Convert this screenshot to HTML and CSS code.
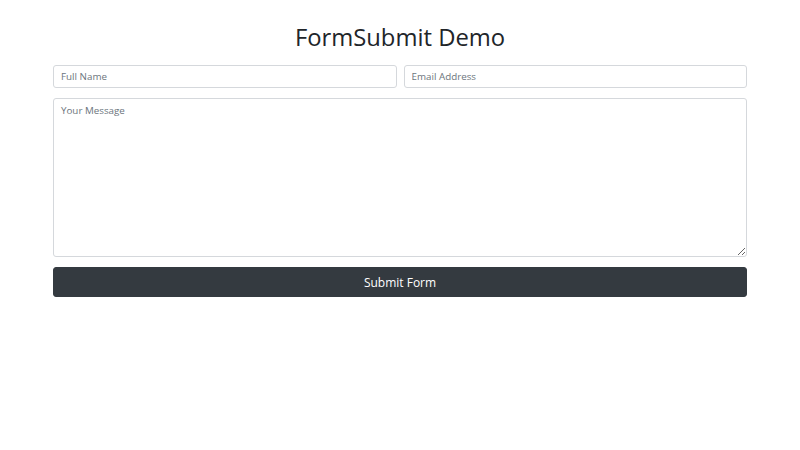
FILE: index.html
```html
<!DOCTYPE html>
<html lang="en">
<head>
<meta charset="utf-8">
<title>FormSubmit Demo</title>
<link rel="stylesheet" href="styles.css">
</head>
<body>
<div class="container">
  <h1 class="title">FormSubmit Demo</h1>
  <form class="form">
    <div class="row">
      <input class="field" type="text" placeholder="Full Name">
      <input class="field" type="email" placeholder="Email Address">
    </div>
    <textarea class="field message" placeholder="Your Message"></textarea>
    <button class="submit" type="button">Submit Form</button>
  </form>
</div>
</body>
</html>
```

FILE: styles.css
```css
* { box-sizing: border-box; }
html, body { margin: 0; padding: 0; background: #fff; }
body {
  font-family: "Open Sans", "Noto Sans", "Liberation Sans", sans-serif;
  color: #212529;
}
.container {
  width: 694px;
  margin: 0 auto;
  padding-top: 20px;
}
.title {
  margin: 0 0 10px;
  text-align: center;
  font-weight: 400;
  font-size: 23.8px;
  line-height: 35px;
  color: #212529;
}
.form {
  display: flex;
  flex-direction: column;
  gap: 10px;
}
.row {
  display: grid;
  grid-template-columns: 1fr 1fr;
  gap: 7px;
}
.field {
  display: block;
  width: 100%;
  height: 23px;
  padding: 0 7px;
  font-family: inherit;
  font-size: 9.8px;
  color: #495057;
  background: #fff;
  border: 1px solid #d5d8dc;
  border-radius: 3px;
  outline: none;
}
.field::placeholder { color: #6c757d; }
.message {
  height: 159px;
  padding: 4px 7px;
  resize: vertical;
  line-height: 15px;
}
.submit {
  display: block;
  width: 100%;
  height: 30px;
  font-family: inherit;
  font-size: 12px;
  color: #fff;
  background: #343a40;
  border: 1px solid #343a40;
  border-radius: 3px;
  cursor: pointer;
}
```
